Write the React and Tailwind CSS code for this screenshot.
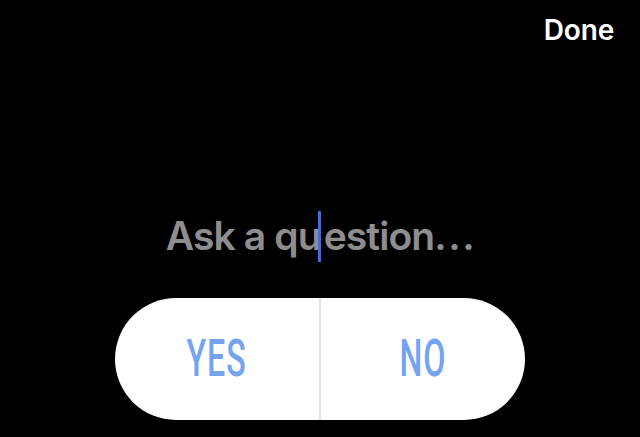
export default function App() {
  return (
    <div className="w-[640px] h-[437px] bg-black flex flex-col overflow-hidden" style={{ fontFamily: 'Inter, "Noto Sans", sans-serif' }}>
      {/* Top bar */}
      <div className="flex justify-end pt-[9px] pr-[26px]">
        <button className="text-white text-[28px] font-semibold tracking-[-0.2px]">Done</button>
      </div>

      {/* Question input with caret */}
      <div className="flex justify-center mt-[165px]">
        <div className="relative text-[39px] font-semibold text-[#8e8e8e] tracking-[-0.9px] leading-none pl-[2px]">
          <span>Ask a qu</span>
          <span className="inline-block w-[3px] h-[51px] bg-[#3b6cf2] align-middle -mt-[6px] -ml-[3px] mr-[3px]" />
          <span>estion</span>
          <span className="tracking-[1.5px]">...</span>
        </div>
      </div>

      {/* Yes / No poll sticker */}
      <div className="flex justify-center mt-[36px]">
        <div className="w-[410px] h-[122px] bg-white rounded-full flex items-stretch">
          <div className="flex-1 flex items-center justify-center">
            <span className="inline-block scale-x-[0.62] text-[52px] font-medium text-[#74a3ef] tracking-[1.5px]" style={{ fontFamily: 'Roboto, sans-serif' }}>YES</span>
          </div>
          <div className="w-[2px] bg-[#e3e3e3]" />
          <div className="flex-1 flex items-center justify-center">
            <span className="inline-block scale-x-[0.62] text-[52px] font-medium text-[#74a3ef] tracking-[1.5px]" style={{ fontFamily: 'Roboto, sans-serif' }}>NO</span>
          </div>
        </div>
      </div>
    </div>
  );
}
